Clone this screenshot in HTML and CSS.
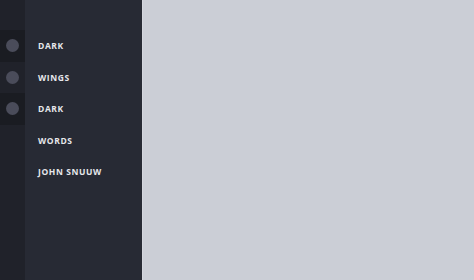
FILE: index.html
```html
<!DOCTYPE html>
<html>
<head>
<meta charset="utf-8">
<link rel="stylesheet" href="styles.css">
</head>
<body>
<div class="app">
  <div class="rail">
    <div class="rail-row dark"><span class="dot"></span></div>
    <div class="rail-row"><span class="dot"></span></div>
    <div class="rail-row dark"><span class="dot"></span></div>
  </div>
  <nav class="sidebar">
    <div class="item">DARK</div>
    <div class="item">WINGS</div>
    <div class="item">DARK</div>
    <div class="item">WORDS</div>
    <div class="item">JOHN SNUUW</div>
  </nav>
  <main class="main"></main>
</div>
</body>
</html>
```
FILE: styles.css
```css
html, body {
  margin: 0;
  padding: 0;
  width: 474px;
  height: 280px;
  overflow: hidden;
}
.app {
  display: flex;
  height: 280px;
}
.rail {
  width: 25px;
  background: #20222a;
  padding-top: 30px;
  box-sizing: border-box;
}
.rail-row {
  height: 31.5px;
  display: flex;
  align-items: center;
  justify-content: center;
}
.rail-row.dark {
  background: #1a1c22;
}
.dot {
  width: 13px;
  height: 13px;
  border-radius: 50%;
  background: #4a4c5a;
}
.sidebar {
  width: 117px;
  background: #272a34;
  padding-top: 30px;
  box-sizing: border-box;
}
.item {
  height: 31.5px;
  display: flex;
  align-items: center;
  padding-left: 13px;
  font-family: "Open Sans", sans-serif;
  font-weight: 700;
  font-size: 8.5px;
  letter-spacing: 0.6px;
  color: #e6e7eb;
}
.main {
  flex: 1;
  background: #cbced6;
  border-left: 1px solid #d4d6dd;
}
```
